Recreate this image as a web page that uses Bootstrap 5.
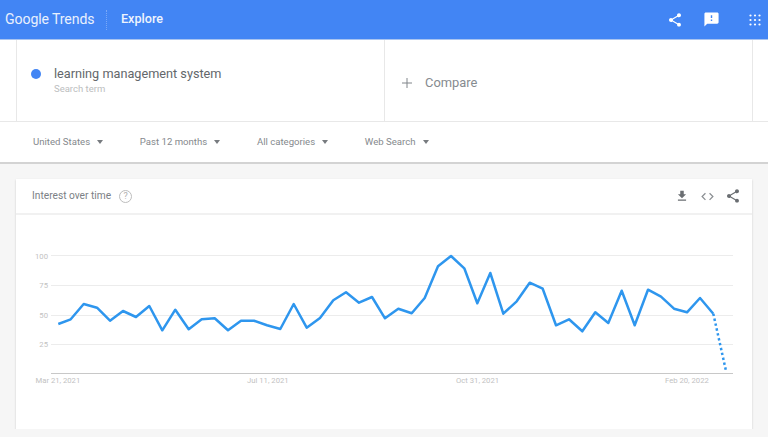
<!DOCTYPE html>
<html lang="en">
<head>
  <meta charset="UTF-8">
  <title>Google Trends - Explore</title>
  <link href="https://cdn.jsdelivr.net/npm/bootstrap@5.3.0/dist/css/bootstrap.min.css" rel="stylesheet">
  <style>
    body { background: #f6f6f6; font-family: Roboto, "Liberation Sans", sans-serif; overflow: hidden; }
    .top-bar { height: 40px; background: #4285f4; border-bottom: 1px solid #a9c4f0; padding: 0; }
    .logo-text { width: 101px; margin-left: 5px; font-size: 14.1px; color: #e9f0fd; letter-spacing: -.1px; }
    .logo-sep { height: 20px; border-left: 1px dotted #7aa8f7; }
    .page-name { margin-left: 14px; margin-top: -1px; font-size: 12.6px; font-weight: 500; color: #eef4fe; }
    .top-icon { fill: #fff; display: block; }
    .term-row { height: 82px; background: #fff; border-bottom: 1px solid #e8e8e8; padding-left: 16px; }
    .term-cell { width: 368px; border-left: 1px solid #e8e8e8; }
    .term-end { width: 16px; border-left: 1px solid #e8e8e8; }
    .term-dot { width: 10px; height: 10px; background: #4285f4; border-radius: 50%; margin-left: 14px; margin-right: 13px; margin-top: -14px; }
    .term-name { font-size: 12.7px; line-height: 16px; color: #63676b; }
    .term-kind { font-size: 9.5px; line-height: 14px; color: #bcbec0; }
    .compare-cell { padding-top: 4px; }
    .compare-plus { margin-left: 17px; margin-right: 13px; stroke: #80858a; }
    .compare-name { font-size: 12.9px; color: #868b90; }
    .filter-bar { height: 42px; background: #fff; border-bottom: 2px solid #d3d3d3; padding-left: 33px; gap: 36.7px; }
    .filter-btn { padding: 0; border: 0; font-size: 9.6px; color: #85898d; border-radius: 0; }
    .filter-btn.dropdown-toggle::after { margin-left: 7px; border-top: 4px solid #777b7f; border-left: 3.5px solid transparent; border-right: 3.5px solid transparent; border-bottom: 0; vertical-align: 1px; }
    .chart-card { margin: 15px 16px 0; width: 736px; height: 250px; border: 0; border-radius: 0; box-shadow: 0 1px 2px rgba(0,0,0,.18); }
    .chart-head { height: 36px; padding: 0 11px 0 16px; background: #fff; border-bottom: 2px solid #f1f1f1; border-radius: 0 !important; }
    .chart-title { font-size: 10.2px; color: #7b8085; }
    .help-mark { width: 13px; height: 13px; margin-left: 8px; border: 1px solid #bdbdbd; border-radius: 50%; font-size: 9px; line-height: 11px; text-align: center; color: #b0b0b0; }
    .head-icon { fill: #6a6e72; display: block; }
    .chart-svg { display: block; }
    .chart-svg text { font-family: Roboto, "Liberation Sans", sans-serif; font-size: 7.7px; fill: #c2c2c2; }
  </style>
</head>
<body>
  <nav class="navbar top-bar flex-nowrap">
    <div class="d-flex align-items-center w-100 h-100">
      <span class="logo-text">Google Trends</span>
      <span class="logo-sep"></span>
      <span class="page-name">Explore</span>
      <div class="ms-auto d-flex align-items-center">
        <svg class="top-icon" width="16" height="16" viewBox="0 0 24 24"><path d="M18 16.08c-.76 0-1.44.3-1.96.77L8.91 12.7c.05-.23.09-.46.09-.7s-.04-.47-.09-.7l7.05-4.11c.54.5 1.25.81 2.04.81 1.66 0 3-1.34 3-3s-1.34-3-3-3-3 1.34-3 3c0 .24.04.47.09.7L8.04 9.81C7.5 9.31 6.79 9 6 9c-1.66 0-3 1.34-3 3s1.34 3 3 3c.79 0 1.5-.31 2.04-.81l7.12 4.16c-.05.21-.08.43-.08.65 0 1.61 1.31 2.92 2.92 2.92 1.61 0 2.92-1.31 2.92-2.92s-1.31-2.92-2.92-2.92z"/></svg>
        <svg class="top-icon" width="17" height="17" viewBox="0 0 24 24" style="margin-left:20px"><path d="M20 2H4c-1.1 0-1.99.9-1.99 2L2 22l4-4h14c1.1 0 2-.9 2-2V4c0-1.1-.9-2-2-2zm-7 12h-2v-2h2v2zm0-4h-2V6h2v4z"/></svg>
        <svg class="top-icon" width="12" height="12" viewBox="0 0 12 12" style="margin-left:29px;margin-right:7px">
          <g><circle cx="1.5" cy="1.5" r="1.1"/><circle cx="6" cy="1.5" r="1.1"/><circle cx="10.5" cy="1.5" r="1.1"/><circle cx="1.5" cy="6" r="1.1"/><circle cx="6" cy="6" r="1.1"/><circle cx="10.5" cy="6" r="1.1"/><circle cx="1.5" cy="10.5" r="1.1"/><circle cx="6" cy="10.5" r="1.1"/><circle cx="10.5" cy="10.5" r="1.1"/></g>
        </svg>
      </div>
    </div>
  </nav>

  <div class="d-flex term-row">
    <div class="term-cell d-flex align-items-center">
      <span class="term-dot"></span>
      <div class="term-text">
        <div class="term-name">learning management system</div>
        <div class="term-kind">Search term</div>
      </div>
    </div>
    <div class="term-cell compare-cell d-flex align-items-center">
      <svg class="compare-plus" width="10" height="10" viewBox="0 0 10 10"><path d="M5 0v10M0 5h10" fill="none"/></svg>
      <span class="compare-name">Compare</span>
    </div>
    <div class="term-end"></div>
  </div>

  <div class="d-flex align-items-center filter-bar">
    <button type="button" class="btn filter-btn dropdown-toggle">United States</button>
    <button type="button" class="btn filter-btn dropdown-toggle">Past 12 months</button>
    <button type="button" class="btn filter-btn dropdown-toggle">All categories</button>
    <button type="button" class="btn filter-btn dropdown-toggle">Web Search</button>
  </div>

  <div class="card chart-card">
    <div class="card-header chart-head d-flex align-items-center">
      <span class="chart-title">Interest over time</span>
      <span class="help-mark">?</span>
      <div class="ms-auto d-flex align-items-center">
        <svg class="head-icon" width="14" height="14" viewBox="0 0 24 24"><path d="M19 9h-4V3H9v6H5l7 7 7-7zM5 18v2h14v-2H5z"/></svg>
        <svg class="head-icon" width="15" height="15" viewBox="0 0 24 24" style="margin-left:11px;fill:#8a8e92"><path d="M9.4 16.6L4.8 12l4.6-4.6L8 6l-6 6 6 6 1.4-1.4zm5.2 0l4.6-4.6-4.6-4.6L16 6l6 6-6 6-1.4-1.4z"/></svg>
        <svg class="head-icon" width="16" height="16" viewBox="0 0 24 24" style="margin-left:10px"><path d="M18 16.08c-.76 0-1.44.3-1.96.77L8.91 12.7c.05-.23.09-.46.09-.7s-.04-.47-.09-.7l7.05-4.11c.54.5 1.25.81 2.04.81 1.66 0 3-1.34 3-3s-1.34-3-3-3-3 1.34-3 3c0 .24.04.47.09.7L8.04 9.81C7.5 9.31 6.79 9 6 9c-1.66 0-3 1.34-3 3s1.34 3 3 3c.79 0 1.5-.31 2.04-.81l7.12 4.16c-.05.21-.08.43-.08.65 0 1.61 1.31 2.92 2.92 2.92 1.61 0 2.92-1.31 2.92-2.92s-1.31-2.92-2.92-2.92z"/></svg>
      </div>
    </div>
    <!-- chart coordinates are page pixels, so the viewBox starts where the card body starts -->
    <svg class="chart-svg" width="736" height="214" viewBox="16 215 736 214">
      <g stroke="#ececec" stroke-width="1">
        <path d="M51 255.5H733M51 285.5H733M51 315.5H733M51 344.5H733"/>
      </g>
      <path d="M51 373.5H733" stroke="#c8c8c8"/>
      <g text-anchor="end">
        <text x="48" y="258.5">100</text>
        <text x="48" y="288">75</text>
        <text x="48" y="317.5">50</text>
        <text x="48" y="347">25</text>
      </g>
      <text x="35.5" y="382.5">Mar 21, 2021</text>
      <text x="247" y="382.5">Jul 11, 2021</text>
      <text x="456" y="382.5">Oct 31, 2021</text>
      <text x="665" y="382.5">Feb 20, 2022</text>
      <polyline fill="none" stroke="#2e96ee" stroke-width="2.5" stroke-linejoin="round" points="58.3,324 70.7,319.3 83.7,304 97,307.7 110,320.7 123,311 136,317 149.3,306 162.3,330.3 175.3,309.7 188.7,329.3 201.7,319.3 214.7,318.3 228,330.3 241,320.7 254,320.7 267,325.3 280.3,329 293.7,304 306.7,327.7 320,318 333.3,300.3 346,292.3 359,302.7 372,297 385,318.3 398.3,308.7 411.7,313.3 424.7,298 438,266.3 451,256 464.3,268.3 477.3,303.3 490.3,273 503.3,313.7 516.7,301.3 529.7,282.7 542.7,288.7 556,325.3 569,319.3 582.3,331.3 595.3,312.3 608.3,323 621.7,290.7 634.7,325.3 648,289.7 661,296.7 674,308.7 687,312.3 700,298 713.3,313.7"/>
      <line x1="713.3" y1="313.7" x2="726.3" y2="372.3" stroke="#2e96ee" stroke-width="2.5" stroke-dasharray="2.4 2.6"/>
    </svg>
  </div>
  <script src="https://cdn.jsdelivr.net/npm/bootstrap@5.3.0/dist/js/bootstrap.bundle.min.js"></script>
</body>
</html>
